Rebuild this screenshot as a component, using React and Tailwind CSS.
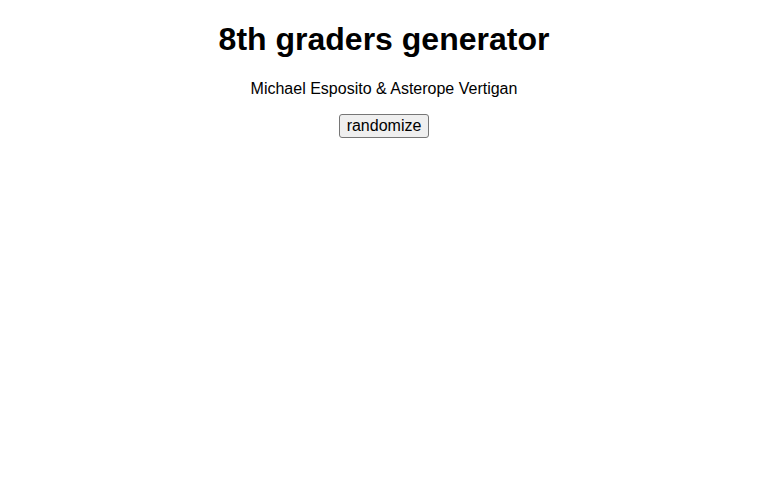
import React, { useState } from "react";

const NAMES = [
  "Michael Esposito & Asterope Vertigan",
  "Jordan Blake & Priya Ramanathan",
  "Sofia Marquez & Tobias Lindqvist",
];

export default function App() {
  const [idx, setIdx] = useState(0);

  return (
    <div className="min-h-screen bg-white text-black text-center font-['Liberation_Sans',Arial,sans-serif]">
      <h1 className="pt-[21px] mb-[22px] text-[32px] leading-[37px] font-bold">
        8th graders generator
      </h1>
      <p className="text-base leading-[18px] mb-[16px]">{NAMES[idx]}</p>
      <button
        onClick={() => setIdx((idx + 1) % NAMES.length)}
        className="px-[7px] py-[2px] text-base leading-[18px] bg-[#efefef] border border-[#767676] rounded-[3px] hover:bg-[#e5e5e5]"
      >
        randomize
      </button>
    </div>
  );
}
